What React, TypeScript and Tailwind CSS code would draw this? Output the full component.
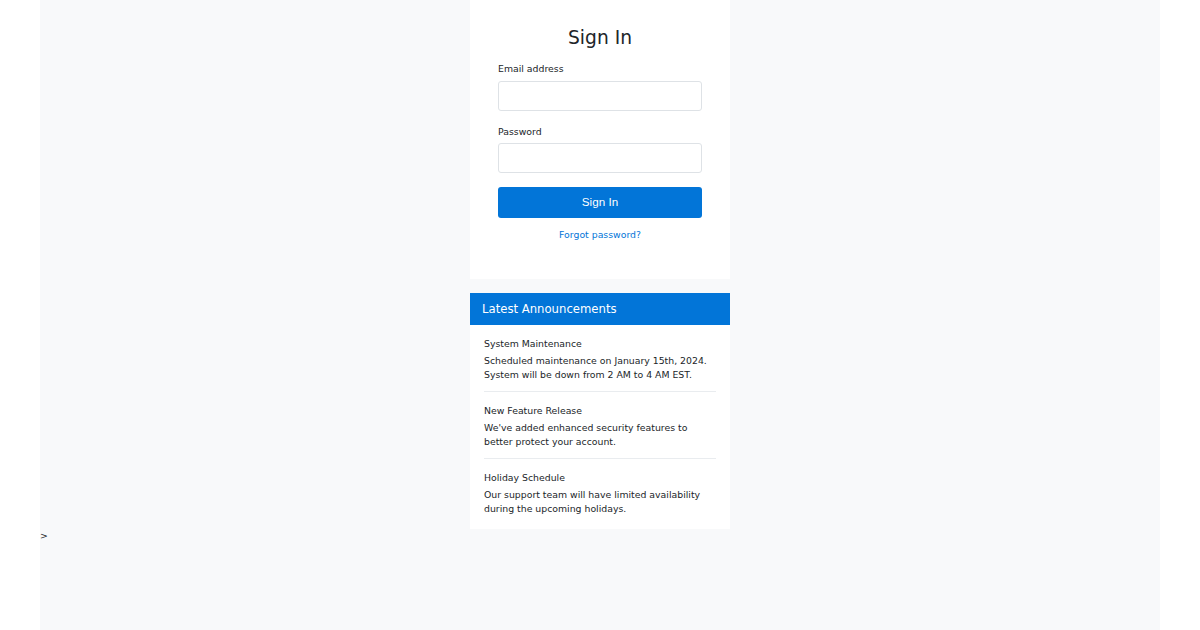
import React from 'react';

const announcements = [
  {
    title: 'System Maintenance',
    body: 'Scheduled maintenance on January 15th, 2024. System will be down from 2 AM to 4 AM EST.',
  },
  {
    title: 'New Feature Release',
    body: "We've added enhanced security features to better protect your account.",
  },
  {
    title: 'Holiday Schedule',
    body: 'Our support team will have limited availability during the upcoming holidays.',
  },
];

export default function App() {
  return (
    <div className="min-h-[630px] bg-white font-['DejaVu_Sans',sans-serif] text-[#212529]">
      <div className="mx-auto w-[1120px] min-h-[630px] bg-[#f8f9fa] text-[9.33px] leading-[14px]">
        <div className="mx-auto w-[260px]">
          {/* sign in card */}
          <div className="bg-white px-[28px] pt-[27px] pb-[37px]">
            <h1 className="text-center text-[18.67px] leading-[22px] font-normal mb-[12px]">Sign In</h1>
            <label className="block leading-[15px] mb-[5px]">Email address</label>
            <input type="email" className="block w-full h-[30px] rounded-[3px] border border-[#dee2e6] bg-white outline-none" />
            <label className="block leading-[15px] mt-[13px] mb-[4px]">Password</label>
            <input type="password" className="block w-full h-[30px] rounded-[3px] border border-[#dee2e6] bg-white outline-none" />
            <button className="mt-[14px] w-full h-[31px] pb-px rounded-[3px] bg-[#0275d8] text-white text-[11.67px] font-['Liberation_Sans',sans-serif]">
              Sign In
            </button>
            <div className="mt-[10px] text-center">
              <a href="#" className="text-[#0275d8]">Forgot password?</a>
            </div>
          </div>

          {/* announcements */}
          <div className="mt-[14px] bg-white">
            <div className="h-[32px] flex items-center px-[12px] bg-[#0275d8] text-white text-[11.67px]">
              Latest Announcements
            </div>
            <div className="px-[14px] pb-[13px]">
              {announcements.map((a, i) => (
                <div
                  key={a.title}
                  className={`pt-[12px] ${i < announcements.length - 1 ? 'pb-[9px] border-b border-[#e9ecef]' : ''}`}
                >
                  <div>{a.title}</div>
                  <p className="mt-[3px]">{a.body}</p>
                </div>
              ))}
            </div>
          </div>
        </div>
        &gt;
      </div>
    </div>
  );
}
